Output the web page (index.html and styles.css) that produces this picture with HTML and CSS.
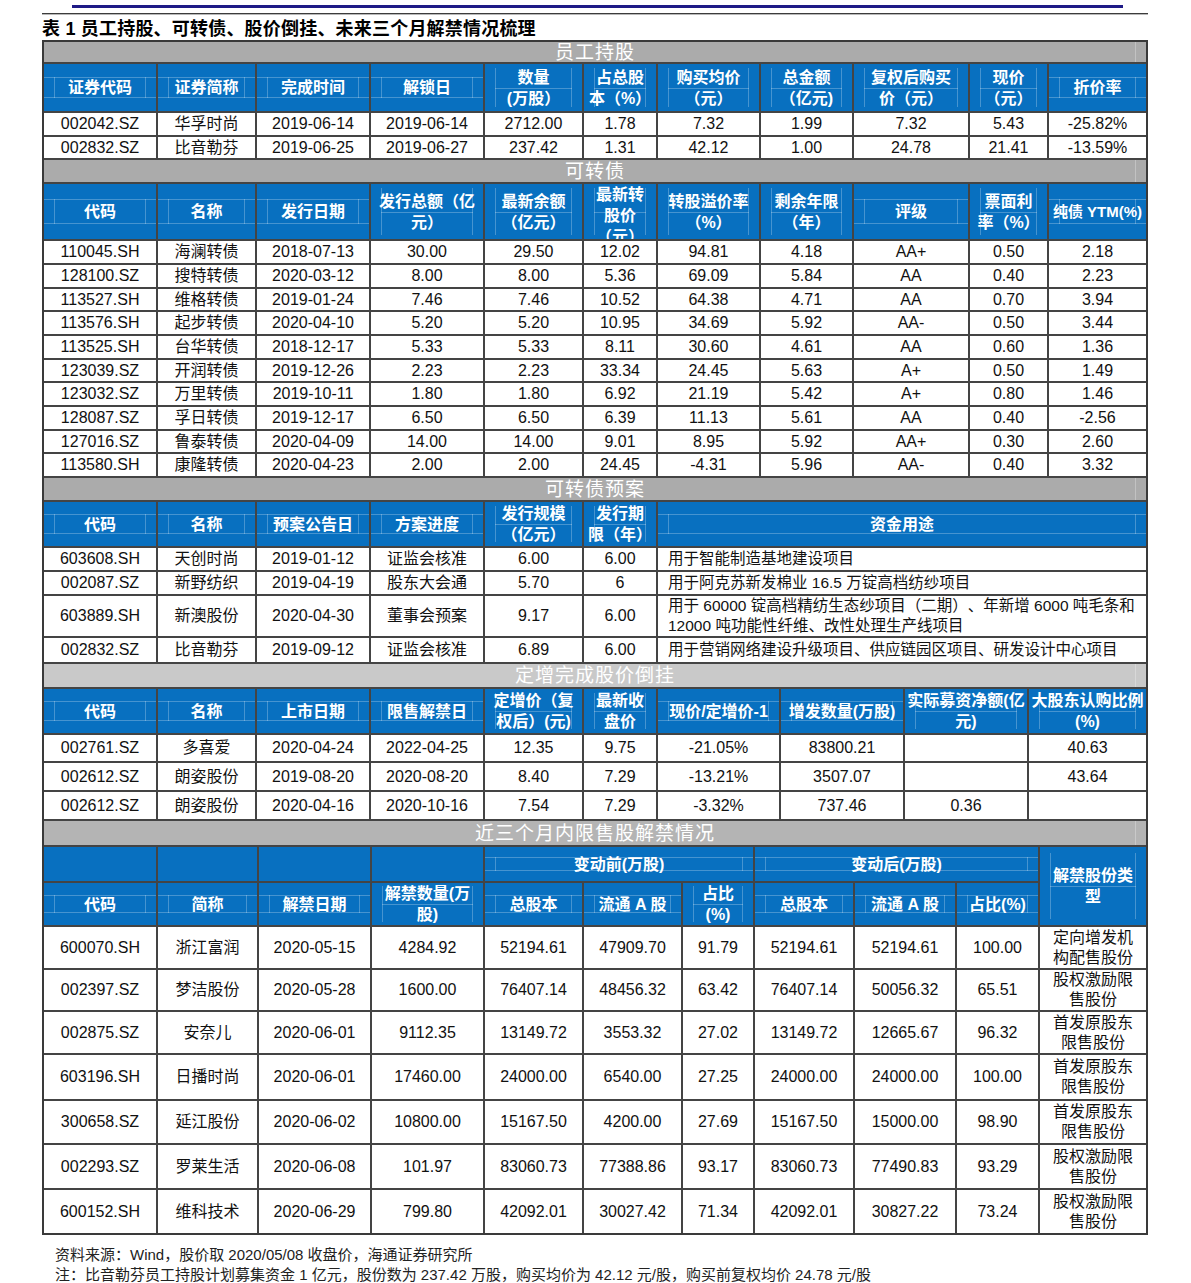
FILE: index.html
```html
<!DOCTYPE html>
<html lang="zh-CN">
<head>
<meta charset="utf-8">
<title>表 1 员工持股、可转债、股价倒挂、未来三个月解禁情况梳理</title>
<link rel="stylesheet" href="styles.css">
</head>
<body>
<div class="page">
  <div class="topline"></div>
  <div class="rule"></div>
  <div class="title">表 1 员工持股、可转债、股价倒挂、未来三个月解禁情况梳理</div>

  <div class="sheet">
    <!-- 员工持股 -->
    <table class="sec">
      <colgroup>
        <col class="w112"><col class="w99"><col class="w114"><col class="w114"><col class="w99"><col class="w74"><col class="w103"><col class="w93"><col class="w116"><col class="w79"><col class="w99">
      </colgroup>
      <tr class="ban h22"><td colspan="11">员工持股</td></tr>
      <tr class="h49">
        <th class="g">证券代码</th><th class="g">证券简称</th><th class="g">完成时间</th><th class="g">解锁日</th>
        <th class="g2">数量<br>(万股）</th><th class="g2">占总股<br>本（%）</th><th class="g2">购买均价<br>（元）</th>
        <th class="g2">总金额<br>（亿元)</th><th class="g2">复权后购买<br>价（元）</th><th class="g2">现价<br>（元）</th><th class="g">折价率</th>
      </tr>
      <tr class="h24"><td>002042.SZ</td><td>华孚时尚</td><td>2019-06-14</td><td>2019-06-14</td><td>2712.00</td><td>1.78</td><td>7.32</td><td>1.99</td><td>7.32</td><td>5.43</td><td>-25.82%</td></tr>
      <tr class="h23"><td>002832.SZ</td><td>比音勒芬</td><td>2019-06-25</td><td>2019-06-27</td><td>237.42</td><td>1.31</td><td>42.12</td><td>1.00</td><td>24.78</td><td>21.41</td><td>-13.59%</td></tr>
    </table>

    <!-- 可转债 -->
    <table class="sec">
      <colgroup>
        <col class="w112"><col class="w99"><col class="w114"><col class="w114"><col class="w99"><col class="w74"><col class="w103"><col class="w93"><col class="w116"><col class="w79"><col class="w99">
      </colgroup>
      <tr class="ban h24"><td colspan="11">可转债</td></tr>
      <tr class="h57">
        <th class="g">代码</th><th class="g">名称</th><th class="g">发行日期</th>
        <th class="g2">发行总额（亿<br>元）</th><th class="g2">最新余额<br>（亿元）</th>
        <th class="g2"><div class="clip">最新转<br>股价<br>（元）</div></th>
        <th class="g2">转股溢价率<br>（%）</th><th class="g2">剩余年限<br>（年）</th><th class="g">评级</th>
        <th class="g2">票面利<br>率（%）</th><th class="g tight">纯债 <b>YTM</b>(%)</th>
      </tr>
      <tr class="h24"><td>110045.SH</td><td>海澜转债</td><td>2018-07-13</td><td>30.00</td><td>29.50</td><td>12.02</td><td>94.81</td><td>4.18</td><td>AA+</td><td>0.50</td><td>2.18</td></tr>
      <tr class="h24"><td>128100.SZ</td><td>搜特转债</td><td>2020-03-12</td><td>8.00</td><td>8.00</td><td>5.36</td><td>69.09</td><td>5.84</td><td>AA</td><td>0.40</td><td>2.23</td></tr>
      <tr class="h23"><td>113527.SH</td><td>维格转债</td><td>2019-01-24</td><td>7.46</td><td>7.46</td><td>10.52</td><td>64.38</td><td>4.71</td><td>AA</td><td>0.70</td><td>3.94</td></tr>
      <tr class="h24"><td>113576.SH</td><td>起步转债</td><td>2020-04-10</td><td>5.20</td><td>5.20</td><td>10.95</td><td>34.69</td><td>5.92</td><td>AA-</td><td>0.50</td><td>3.44</td></tr>
      <tr class="h24"><td>113525.SH</td><td>台华转债</td><td>2018-12-17</td><td>5.33</td><td>5.33</td><td>8.11</td><td>30.60</td><td>4.61</td><td>AA</td><td>0.60</td><td>1.36</td></tr>
      <tr class="h23"><td>123039.SZ</td><td>开润转债</td><td>2019-12-26</td><td>2.23</td><td>2.23</td><td>33.34</td><td>24.45</td><td>5.63</td><td>A+</td><td>0.50</td><td>1.49</td></tr>
      <tr class="h24"><td>123032.SZ</td><td>万里转债</td><td>2019-10-11</td><td>1.80</td><td>1.80</td><td>6.92</td><td>21.19</td><td>5.42</td><td>A+</td><td>0.80</td><td>1.46</td></tr>
      <tr class="h24"><td>128087.SZ</td><td>孚日转债</td><td>2019-12-17</td><td>6.50</td><td>6.50</td><td>6.39</td><td>11.13</td><td>5.61</td><td>AA</td><td>0.40</td><td>-2.56</td></tr>
      <tr class="h23"><td>127016.SZ</td><td>鲁泰转债</td><td>2020-04-09</td><td>14.00</td><td>14.00</td><td>9.01</td><td>8.95</td><td>5.92</td><td>AA+</td><td>0.30</td><td>2.60</td></tr>
      <tr class="h24"><td>113580.SH</td><td>康隆转债</td><td>2020-04-23</td><td>2.00</td><td>2.00</td><td>24.45</td><td>-4.31</td><td>5.96</td><td>AA-</td><td>0.40</td><td>3.32</td></tr>
    </table>

    <!-- 可转债预案 -->
    <table class="sec">
      <colgroup>
        <col class="w112"><col class="w99"><col class="w114"><col class="w114"><col class="w99"><col class="w74"><col class="w490">
      </colgroup>
      <tr class="ban h24"><td colspan="7">可转债预案</td></tr>
      <tr class="h46">
        <th class="g">代码</th><th class="g">名称</th><th class="g">预案公告日</th><th class="g">方案进度</th>
        <th class="g2">发行规模<br>（亿元）</th><th class="g2">发行期<br>限（年）</th><th class="g">资金用途</th>
      </tr>
      <tr class="h24"><td>603608.SH</td><td>天创时尚</td><td>2019-01-12</td><td>证监会核准</td><td>6.00</td><td>6.00</td><td class="txt">用于智能制造基地建设项目</td></tr>
      <tr class="h24"><td>002087.SZ</td><td>新野纺织</td><td>2019-04-19</td><td>股东大会通</td><td>5.70</td><td>6</td><td class="txt">用于阿克苏新发棉业 16.5 万锭高档纺纱项目</td></tr>
      <tr class="h42"><td>603889.SH</td><td>新澳股份</td><td>2020-04-30</td><td>董事会预案</td><td>9.17</td><td>6.00</td><td class="txt two">用于 60000 锭高档精纺生态纱项目（二期）、年新增 6000 吨毛条和<br>12000 吨功能性纤维、改性处理生产线项目</td></tr>
      <tr class="h26"><td>002832.SZ</td><td>比音勒芬</td><td>2019-09-12</td><td>证监会核准</td><td>6.89</td><td>6.00</td><td class="txt">用于营销网络建设升级项目、供应链园区项目、研发设计中心项目</td></tr>
    </table>

    <!-- 定增完成股价倒挂 -->
    <table class="sec">
      <colgroup>
        <col class="w112"><col class="w99"><col class="w114"><col class="w114"><col class="w99"><col class="w74"><col class="w123"><col class="w124"><col class="w124"><col class="w119">
      </colgroup>
      <tr class="ban light h25"><td colspan="10">定增完成股价倒挂</td></tr>
      <tr class="h46">
        <th class="g">代码</th><th class="g">名称</th><th class="g">上市日期</th><th class="g">限售解禁日</th>
        <th class="g2">定增价（复<br>权后）(元)</th><th class="g2">最新收<br>盘价</th><th class="g">现价/定增价-1</th>
        <th class="g">增发数量(万股)</th><th class="g2">实际募资净额(亿<br>元)</th><th class="g2">大股东认购比例<br>(%)</th>
      </tr>
      <tr class="h28"><td>002761.SZ</td><td>多喜爱</td><td>2020-04-24</td><td>2022-04-25</td><td>12.35</td><td>9.75</td><td>-21.05%</td><td>83800.21</td><td></td><td>40.63</td></tr>
      <tr class="h29"><td>002612.SZ</td><td>朗姿股份</td><td>2019-08-20</td><td>2020-08-20</td><td>8.40</td><td>7.29</td><td>-13.21%</td><td>3507.07</td><td></td><td>43.64</td></tr>
      <tr class="h29"><td>002612.SZ</td><td>朗姿股份</td><td>2020-04-16</td><td>2020-10-16</td><td>7.54</td><td>7.29</td><td>-3.32%</td><td>737.46</td><td>0.36</td><td></td></tr>
    </table>

    <!-- 近三个月内限售股解禁情况 -->
    <table class="sec">
      <colgroup>
        <col class="w112"><col class="w101"><col class="w113"><col class="w113"><col class="w99"><col class="w99"><col class="w72"><col class="w100"><col class="w102"><col class="w83"><col class="w108">
      </colgroup>
      <tr class="ban mid h26"><td colspan="11">近三个月内限售股解禁情况</td></tr>
      <tr class="h36">
        <th></th><th></th><th></th><th></th>
        <th class="g" colspan="3">变动前(万股)</th><th class="g" colspan="3">变动后(万股)</th>
        <th class="g2" rowspan="2">解禁股份类<br>型</th>
      </tr>
      <tr class="h44">
        <th class="g">代码</th><th class="g">简称</th><th class="g">解禁日期</th><th class="g2">解禁数量(万<br>股)</th>
        <th class="g">总股本</th><th class="g">流通 A 股</th><th class="g2">占比<br>(%)</th>
        <th class="g">总股本</th><th class="g">流通 A 股</th><th class="g">占比(%)</th>
      </tr>
      <tr class="h43"><td>600070.SH</td><td>浙江富润</td><td>2020-05-15</td><td>4284.92</td><td>52194.61</td><td>47909.70</td><td>91.79</td><td>52194.61</td><td>52194.61</td><td>100.00</td><td class="two">定向增发机<br>构配售股份</td></tr>
      <tr class="h42"><td>002397.SZ</td><td>梦洁股份</td><td>2020-05-28</td><td>1600.00</td><td>76407.14</td><td>48456.32</td><td>63.42</td><td>76407.14</td><td>50056.32</td><td>65.51</td><td class="two">股权激励限<br>售股份</td></tr>
      <tr class="h43"><td>002875.SZ</td><td>安奈儿</td><td>2020-06-01</td><td>9112.35</td><td>13149.72</td><td>3553.32</td><td>27.02</td><td>13149.72</td><td>12665.67</td><td>96.32</td><td class="two">首发原股东<br>限售股份</td></tr>
      <tr class="h46"><td>603196.SH</td><td>日播时尚</td><td>2020-06-01</td><td>17460.00</td><td>24000.00</td><td>6540.00</td><td>27.25</td><td>24000.00</td><td>24000.00</td><td>100.00</td><td class="two">首发原股东<br>限售股份</td></tr>
      <tr class="h44"><td>300658.SZ</td><td>延江股份</td><td>2020-06-02</td><td>10800.00</td><td>15167.50</td><td>4200.00</td><td>27.69</td><td>15167.50</td><td>15000.00</td><td>98.90</td><td class="two">首发原股东<br>限售股份</td></tr>
      <tr class="h45"><td>002293.SZ</td><td>罗莱生活</td><td>2020-06-08</td><td>101.97</td><td>83060.73</td><td>77388.86</td><td>93.17</td><td>83060.73</td><td>77490.83</td><td>93.29</td><td class="two">股权激励限<br>售股份</td></tr>
      <tr class="h43"><td>600152.SH</td><td>维科技术</td><td>2020-06-29</td><td>799.80</td><td>42092.01</td><td>30027.42</td><td>71.34</td><td>42092.01</td><td>30827.22</td><td>73.24</td><td class="two">股权激励限<br>售股份</td></tr>
    </table>
  </div>

  <div class="notes">
    <p>资料来源：Wind，股价取 2020/05/08 收盘价，海通证券研究所</p>
    <p>注：比音勒芬员工持股计划募集资金 1 亿元，股份数为 237.42 万股，购买均价为 42.12 元/股，购买前复权均价 24.78 元/股</p>
  </div>
</div>
</body>
</html>
```

FILE: styles.css
```css
* { box-sizing: border-box; }

html, body {
  margin: 0;
  padding: 0;
  background: #ffffff;
}

body {
  font-family: "Liberation Sans", "Noto Sans CJK SC", sans-serif;
  color: #111111;
  text-spacing-trim: space-all;
}

.page {
  width: 1191px;
  padding-left: 42px;
}

.topline {
  margin: 5px 0 0 30px;
  width: 1051px;
  height: 3px;
  background: #1e1a86;
}

.rule {
  margin-top: 5px;
  width: 1106px;
  height: 2px;
  border-top: 1px solid #3c3c3c;
  border-bottom: 1px solid #b8b8b8;
}

.title {
  height: 25px;
  line-height: 28px;
  font-size: 18px;
  font-weight: 700;
  letter-spacing: 0.2px;
  color: #000;
  white-space: nowrap;
  overflow: visible;
}

.sheet {
  width: 1106px;
  border: 2px solid #3a3a3a;
}

.sec {
  width: 1102px;
  table-layout: fixed;
  border-collapse: separate;
  border-spacing: 0;
}

.sec td,
.sec th {
  padding: 0;
  border-left: 2px solid #444444;
  border-bottom: 2px solid #444444;
  text-align: center;
  vertical-align: middle;
  font-size: 16px;
  line-height: 18px;
  white-space: nowrap;
  overflow: hidden;
}

.sec tr > :first-child { border-left: none; }
.sheet .sec:last-child tr:last-child td { border-bottom: none; }

/* column widths */
.w72 { width: 72px; }
.w74 { width: 74px; }
.w79 { width: 79px; }
.w83 { width: 83px; }
.w93 { width: 93px; }
.w99 { width: 99px; }
.w100 { width: 100px; }
.w101 { width: 101px; }
.w102 { width: 102px; }
.w103 { width: 103px; }
.w108 { width: 108px; }
.w112 { width: 112px; }
.w113 { width: 113px; }
.w114 { width: 114px; }
.w116 { width: 116px; }
.w119 { width: 119px; }
.w123 { width: 123px; }
.w124 { width: 124px; }
.w490 { width: 490px; }

/* row heights */
.h22 { height: 22px; }
.h23 { height: 23px; }
.h24 { height: 24px; }
.h25 { height: 25px; }
.h26 { height: 26px; }
.h28 { height: 28px; }
.h29 { height: 29px; }
.h36 { height: 36px; }
.h42 { height: 42px; }
.h43 { height: 43px; }
.h44 { height: 44px; }
.h45 { height: 45px; }
.h46 { height: 46px; }
.h49 { height: 49px; }
.h57 { height: 57px; }

/* section banners */
.sec .ban td {
  position: relative;
  background: #ababab;
  color: #ffffff;
  font-size: 19px;
  letter-spacing: 1px;
  font-weight: 400;
  line-height: 19px;
}
.sec .ban td::after {
  content: "";
  position: absolute;
  top: 0;
  bottom: 0;
  right: 10px;
  border-right: 1px solid rgba(255, 255, 255, 0.28);
}
.sec .ban.light td { background: #c9c9c9; }
.sec .ban.mid td { background: #b4b4b4; }

/* blue header cells */
.sec th {
  position: relative;
  background: #0870c0;
  color: #ffffff;
  font-weight: 700;
  line-height: 21px;
}

.sec th.g::before,
.sec th.g::after,
.sec th.g2::before,
.sec th.g2::after {
  content: "";
  position: absolute;
  pointer-events: none;
}

.sec th.g::before {
  left: 10px;
  right: 10px;
  top: 28%;
  bottom: 28%;
  border-left: 1px solid rgba(255, 255, 255, 0.25);
  border-right: 1px solid rgba(255, 255, 255, 0.25);
}
.sec th.g::after {
  left: 0;
  right: 0;
  top: 28%;
  bottom: 28%;
  border-top: 1px solid rgba(255, 255, 255, 0.25);
  border-bottom: 1px solid rgba(255, 255, 255, 0.25);
}

.sec th.g2::before {
  left: 10px;
  right: 10px;
  top: 8%;
  bottom: 8%;
  border-left: 1px solid rgba(255, 255, 255, 0.25);
  border-right: 1px solid rgba(255, 255, 255, 0.25);
}
.sec th.g2::after {
  left: 10px;
  right: 10px;
  top: 50%;
  border-top: 1px solid rgba(255, 255, 255, 0.25);
}

.sec th.tight {
  font-size: 15px;
}
.sec th b { font-weight: 700; }

.clip {
  height: 55px;
  overflow: hidden;
  line-height: 21px;
}

/* data cells */
.sec td.txt {
  text-align: left;
  padding-left: 10px;
  font-size: 15.5px;
}
.sec td.two {
  line-height: 20px;
}

/* notes */
.notes {
  margin-top: 10px;
  padding-left: 13px;
  font-size: 15px;
  color: #222;
}
.notes p {
  margin: 0;
  line-height: 20px;
  white-space: nowrap;
}
```
